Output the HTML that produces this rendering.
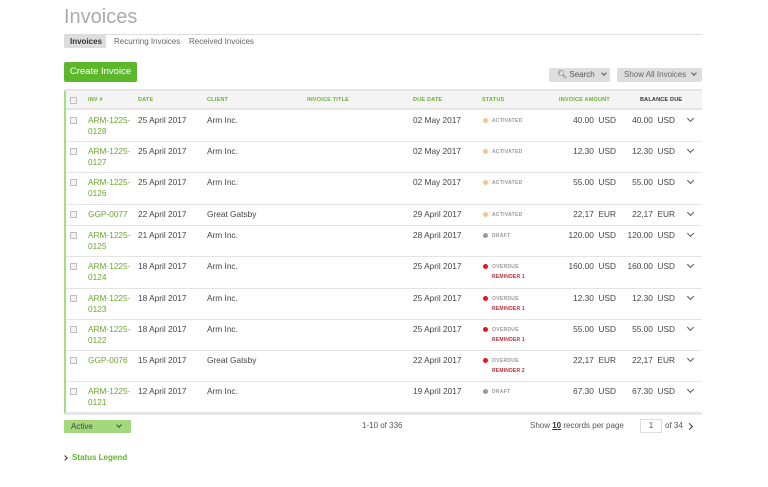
<!DOCTYPE html><html><head><style>
*{margin:0;padding:0;box-sizing:border-box}
body{width:768px;height:487px;background:#fff;font-family:"Liberation Sans",sans-serif;color:#444;position:relative;overflow:hidden}
.a{position:absolute;white-space:nowrap}
.g{color:#6aa82c}
.h{font-size:5.5px;font-weight:bold;letter-spacing:.2px;color:#6ab02c}
.cb{width:7px;height:7px;border:1px solid #bbb;border-radius:1px;background:#f4f4f4}
.t{font-size:8.3px}
.dot{width:5px;height:5px;border-radius:50%}
.st{font-size:5px;font-weight:bold;color:#999;letter-spacing:.3px}
.rm{font-size:5px;font-weight:bold;color:#b0303a;letter-spacing:.2px}
.chev{width:5px;height:5px;border-right:1px solid #555;border-bottom:1px solid #555;transform:rotate(45deg)}
</style></head><body>
<div class="a" style="left:64px;top:6px;font-size:20px;color:#aaa">Invoices</div>
<div class="a" style="left:64px;top:34px;width:638px;height:1px;background:#ddd"></div>
<div class="a" style="left:64px;top:35px;width:42px;height:13px;background:#ddd"></div>
<div class="a t" style="left:70px;top:37px;font-weight:bold;color:#333;font-size:8px">Invoices</div>
<div class="a t" style="left:114px;top:37px;color:#666;font-size:8px">Recurring Invoices</div>
<div class="a t" style="left:189px;top:37px;color:#666;font-size:8px">Received Invoices</div>
<div class="a" style="left:64px;top:62px;width:73px;height:20px;background:#5cb82a;border-radius:2px;color:#fff;font-size:9.5px;line-height:20px;text-align:center">Create Invoice</div>
<div class="a" style="left:549px;top:68px;width:61px;height:14px;background:#ddd;border-radius:2px;font-size:8px;line-height:14px;padding-left:8px;color:#555">&#x1F50D;&#xFE0E; Search <span style="display:inline-block;width:4px;height:4px;border-right:1px solid #555;border-bottom:1px solid #555;transform:rotate(45deg);margin:0 0 2px 5px"></span></div>
<div class="a" style="left:617px;top:68px;width:85px;height:14px;background:#ddd;border-radius:2px;font-size:8px;line-height:14px;padding-left:7px;color:#666">Show All Invoices <span style="display:inline-block;width:4px;height:4px;border-right:1px solid #555;border-bottom:1px solid #555;transform:rotate(45deg);margin:0 0 2px 4px"></span></div>
<div class="a" style="left:64px;top:89px;width:638px;height:2px;background:#e6e6e6"></div>
<div class="a" style="left:64px;top:91px;width:638px;height:19px;background:#f4f4f4;border-bottom:2px solid #e3e3e3"></div>
<div class="a" style="left:64px;top:91px;width:1.5px;height:322px;background:#a5dc86"></div>
<div class="a cb" style="left:70px;top:97px"></div>
<div class="a h" style="left:88px;top:97px">INV #</div>
<div class="a h" style="left:138px;top:97px">DATE</div>
<div class="a h" style="left:207px;top:97px">CLIENT</div>
<div class="a h" style="left:307px;top:97px">INVOICE TITLE</div>
<div class="a h" style="left:413px;top:97px">DUE DATE</div>
<div class="a h" style="left:482px;top:97px">STATUS</div>
<div class="a h" style="left:559px;top:97px">INVOICE AMOUNT</div>
<div class="a h" style="left:640px;top:97px;color:#333">BALANCE DUE</div>
<div id="rows"></div>
<script>
const R=[
["ARM-1225-<br>0128","25 April 2017","Arm Inc.","02 May 2017","a","40.00","USD",31],
["ARM-1225-<br>0127","25 April 2017","Arm Inc.","02 May 2017","a","12.30","USD",31],
["ARM-1225-<br>0126","25 April 2017","Arm Inc.","02 May 2017","a","55.00","USD",32],
["GGP-0077","22 April 2017","Great Gatsby","29 April 2017","a","22,17","EUR",21],
["ARM-1225-<br>0125","21 April 2017","Arm Inc.","28 April 2017","d","120.00","USD",31],
["ARM-1225-<br>0124","18 April 2017","Arm Inc.","25 April 2017","o1","160.00","USD",32],
["ARM-1225-<br>0123","18 April 2017","Arm Inc.","25 April 2017","o1","12.30","USD",31],
["ARM-1225-<br>0122","18 April 2017","Arm Inc.","25 April 2017","o1","55.00","USD",31],
["GGP-0076","15 April 2017","Great Gatsby","22 April 2017","o2","22,17","EUR",31],
["ARM-1225-<br>0121","12 April 2017","Arm Inc.","19 April 2017","d","67.30","USD",31]];
let y=112,h='';
for(const r of R){
 const ty=y+3;
 h+=`<div class="a cb" style="left:70px;top:${ty+2}px"></div>
<div class="a t g" style="left:88px;top:${ty}px;line-height:11px">${r[0]}</div>
<div class="a t" style="left:138px;top:${ty}px">${r[1]}</div>
<div class="a t" style="left:207px;top:${ty}px">${r[2]}</div>
<div class="a t" style="left:413px;top:${ty}px">${r[3]}</div>`;
 let c=r[4]=='a'?'#f5c48a':r[4]=='d'?'#999':'#e8141e';
 let l=r[4]=='a'?'ACTIVATED':r[4]=='d'?'DRAFT':'OVERDUE';
 h+=`<div class="a dot" style="left:483px;top:${ty+3}px;background:${c}"></div><div class="a st" style="left:492px;top:${ty+3}px">${l}</div>`;
 if(r[4][0]=='o')h+=`<div class="a rm" style="left:492px;top:${ty+13}px">REMINDER ${r[4][1]}</div>`;
 h+=`<div class="a t" style="right:152px;top:${ty}px">${r[5]}&nbsp; ${r[6]}</div>
<div class="a t" style="right:93px;top:${ty}px">${r[5]}&nbsp; ${r[6]}</div>
<div class="a chev" style="left:688px;top:${ty+1}px"></div>`;
 y+=r[7];
 h+=`<div class="a" style="left:66px;top:${y-2}px;width:636px;height:1px;background:#e4e4e4"></div>`;
}
h+=`<div class="a" style="left:64px;top:${y-1}px;width:638px;height:2px;background:#e8e8e8"></div>`;
document.getElementById('rows').innerHTML=h;
</script>
<div class="a" style="left:64px;top:420px;width:67px;height:13px;background:#a4d87c;border-radius:1px;font-size:8px;line-height:13px;padding-left:7px;color:#444">Active<span style="position:absolute;left:53px;top:3px;width:4px;height:4px;border-right:1px solid #444;border-bottom:1px solid #444;transform:rotate(45deg)"></span></div>
<div class="a t" style="left:362px;top:421px;color:#555;font-size:8px">1-10 of 336</div>
<div class="a t" style="left:530px;top:421px;color:#555;font-size:8px">Show <b style="text-decoration:underline;color:#333">10</b> records per page</div>
<div class="a" style="left:640px;top:419px;width:22px;height:14px;border:1px solid #ddd;font-size:8px;text-align:center;line-height:12px;color:#555">1</div>
<div class="a t" style="left:665px;top:421px;color:#555;font-size:8px">of 34</div>
<div class="a" style="left:687px;top:424px;width:5px;height:5px;border-right:1.5px solid #333;border-top:1.5px solid #333;transform:rotate(45deg)"></div>
<div class="a" style="left:63px;top:456px;width:4px;height:4px;border-right:1.5px solid #333;border-top:1.5px solid #333;transform:rotate(45deg)"></div>
<div class="a" style="left:72px;top:453px;font-size:8px;font-weight:bold;color:#5cb82a">Status Legend</div>
</body></html>
